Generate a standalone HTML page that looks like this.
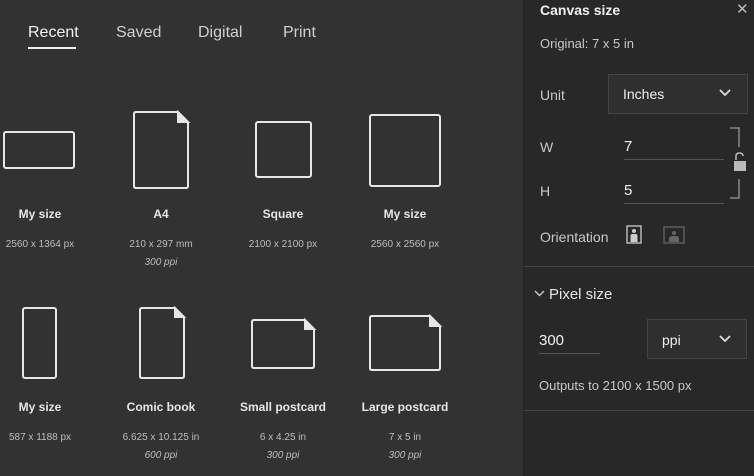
<!DOCTYPE html>
<html><head><style>
html,body{margin:0;padding:0;width:754px;height:476px;overflow:hidden;background:#323232;font-family:"Liberation Sans",sans-serif;}
.a{position:absolute;white-space:nowrap}
.lab{font-size:12px;font-weight:bold;color:#e6e6e6;text-align:center;width:120px;margin-left:-60px}
.dim{font-size:10px;color:#bdbdbd;text-align:center;width:120px;margin-left:-60px}
.ppi{font-size:10px;font-style:italic;color:#bdbdbd;text-align:center;width:120px;margin-left:-60px}
.tab{font-size:16px;color:#d0d0d0}
.pl{font-size:14px;color:#c8c8c8}
</style></head><body>
<div class="a" style="left:523px;top:0;width:231px;height:476px;background:#282828;border-left:1px solid #222"></div>
<div class="a tab" style="left:28px;top:24px;color:#f2f2f2">Recent</div>
<div class="a" style="left:28px;top:47px;width:48px;height:2px;background:#f0f0f0"></div>
<div class="a tab" style="left:116px;top:24px">Saved</div>
<div class="a tab" style="left:198px;top:24px">Digital</div>
<div class="a tab" style="left:283px;top:24px">Print</div>

<svg class="a" style="left:0;top:0" width="523" height="476" fill="none" stroke="#e6e6e6" stroke-width="2">
<rect x="4" y="132" width="70" height="36" rx="2"/>
<path d="M136,112 H178 L188,122 V186 Q188,188 186,188 H136 Q134,188 134,186 V114 Q134,112 136,112 Z"/>
<path d="M178,112 V122 H188 Z" fill="#e6e6e6"/>
<rect x="256" y="122" width="55" height="55" rx="2"/>
<rect x="370" y="115" width="70" height="71" rx="2"/>
<rect x="23" y="308" width="33" height="70" rx="2"/>
<path d="M142,308 H175 L184,317 V376 Q184,378 182,378 H142 Q140,378 140,376 V310 Q140,308 142,308 Z"/>
<path d="M175,308 V317 H184 Z" fill="#e6e6e6"/>
<path d="M254,320 H305 L314,329 V366 Q314,368 312,368 H254 Q252,368 252,366 V322 Q252,320 254,320 Z"/>
<path d="M305,320 V329 H314 Z" fill="#e6e6e6"/>
<path d="M372,316 H430 L440,326 V368 Q440,370 438,370 H372 Q370,370 370,368 V318 Q370,316 372,316 Z"/>
<path d="M430,316 V326 H440 Z" fill="#e6e6e6"/>
</svg>

<div class="a lab" style="left:40px;top:207px">My size</div>
<div class="a dim" style="left:40px;top:239px">2560 x 1364 px</div>
<div class="a lab" style="left:161px;top:207px">A4</div>
<div class="a dim" style="left:161px;top:239px">210 x 297 mm</div>
<div class="a ppi" style="left:161px;top:257px">300 ppi</div>
<div class="a lab" style="left:283px;top:207px">Square</div>
<div class="a dim" style="left:283px;top:239px">2100 x 2100 px</div>
<div class="a lab" style="left:405px;top:207px">My size</div>
<div class="a dim" style="left:405px;top:239px">2560 x 2560 px</div>

<div class="a lab" style="left:40px;top:400px">My size</div>
<div class="a dim" style="left:40px;top:432px">587 x 1188 px</div>
<div class="a lab" style="left:161px;top:400px">Comic book</div>
<div class="a dim" style="left:161px;top:432px">6.625 x 10.125 in</div>
<div class="a ppi" style="left:161px;top:450px">600 ppi</div>
<div class="a lab" style="left:283px;top:400px">Small postcard</div>
<div class="a dim" style="left:283px;top:432px">6 x 4.25 in</div>
<div class="a ppi" style="left:283px;top:450px">300 ppi</div>
<div class="a lab" style="left:405px;top:400px">Large postcard</div>
<div class="a dim" style="left:405px;top:432px">7 x 5 in</div>
<div class="a ppi" style="left:405px;top:450px">300 ppi</div>

<div class="a" style="left:540px;top:2px;font-size:14px;font-weight:bold;color:#f0f0f0">Canvas size</div>
<div class="a" style="left:736px;top:0px;font-size:15px;color:#bbb">✕</div>
<div class="a pl" style="left:540px;top:36px;font-size:13px">Original: 7 x 5 in</div>
<div class="a pl" style="left:540px;top:87px">Unit</div>
<div class="a" style="left:608px;top:74px;width:138px;height:38px;border:1px solid #444;background:#2f2f2f"></div>
<div class="a" style="left:623px;top:86px;font-size:14px;color:#eee">Inches</div>
<svg class="a" style="left:718px;top:88px" width="14" height="10"><path d="M2,2 L7,7 L12,2" stroke="#ddd" stroke-width="1.8" fill="none"/></svg>
<div class="a pl" style="left:540px;top:139px">W</div>
<div class="a" style="left:624px;top:138px;font-size:15px;color:#f2f2f2">7</div>
<div class="a" style="left:624px;top:159px;width:100px;height:1px;background:#555"></div>
<div class="a pl" style="left:540px;top:183px">H</div>
<div class="a" style="left:624px;top:182px;font-size:15px;color:#f2f2f2">5</div>
<div class="a" style="left:624px;top:203px;width:100px;height:1px;background:#555"></div>
<svg class="a" style="left:728px;top:127px" width="26" height="74" fill="none" stroke="#888" stroke-width="1.5">
<path d="M2,1 H11 V20"/><path d="M2,71 H11 V52"/>
<path d="M8,33 V29 Q8,26 11.5,26 Q15,26 15,29" stroke="#bbb"/>
<rect x="6" y="34" width="12" height="10" fill="#bbb" stroke="none"/>
</svg>
<div class="a pl" style="left:540px;top:229px">Orientation</div>
<svg class="a" style="left:626px;top:225px" width="16" height="19"><rect x="1" y="1" width="14" height="17" fill="none" stroke="#ccc" stroke-width="1.3"/><circle cx="8" cy="6" r="2" fill="#ccc"/><path d="M4.5,17 V11 Q4.5,9 6.5,9 H9.5 Q11.5,9 11.5,11 V17 Z" fill="#ccc"/></svg>
<svg class="a" style="left:663px;top:226px" width="22" height="18"><rect x="1" y="1" width="20" height="16" fill="none" stroke="#666" stroke-width="1.3"/><circle cx="11" cy="7" r="2" fill="#666"/><path d="M6,16 V13 Q6,10 9,10 H13 Q16,10 16,13 V16 Z" fill="#666"/></svg>
<div class="a" style="left:524px;top:266px;width:230px;height:1px;background:#444"></div>
<svg class="a" style="left:534px;top:290px" width="12" height="8"><path d="M1,1 L5.5,5.5 L10,1" stroke="#ccc" stroke-width="1.4" fill="none"/></svg>
<div class="a" style="left:549px;top:286px;font-size:15px;color:#e6e6e6">Pixel size</div>
<div class="a" style="left:539px;top:332px;font-size:15px;color:#f2f2f2">300</div>
<div class="a" style="left:539px;top:353px;width:61px;height:1px;background:#555"></div>
<div class="a" style="left:647px;top:319px;width:98px;height:38px;border:1px solid #444;background:#2f2f2f"></div>
<div class="a" style="left:662px;top:332px;font-size:14px;color:#eee">ppi</div>
<svg class="a" style="left:718px;top:334px" width="14" height="10"><path d="M2,2 L7,7 L12,2" stroke="#ddd" stroke-width="1.8" fill="none"/></svg>
<div class="a pl" style="left:539px;top:378px;font-size:13px">Outputs to 2100 x 1500 px</div>
<div class="a" style="left:524px;top:410px;width:230px;height:1px;background:#444"></div>
</body></html>
